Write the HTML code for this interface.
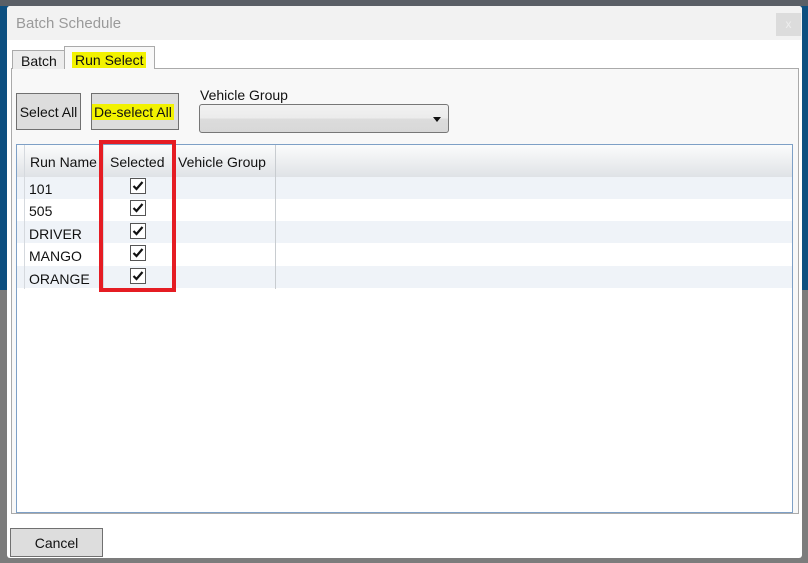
<!DOCTYPE html>
<html><head><meta charset="utf-8"><style>
*{box-sizing:border-box;margin:0;padding:0}
body{width:808px;height:563px;overflow:hidden;position:relative;font-family:"Liberation Sans",sans-serif;font-size:14px;color:#111;
background:linear-gradient(#5a5f66 0,#5a5f66 6px,#0d4f80 6px,#0d4f80 290px,#7c7c7c 290px)}
.a{position:absolute}
.dlg{left:7px;top:6px;width:795px;height:552px;background:#fff;border-radius:3px}
.title{left:7px;top:6px;width:795px;height:34px;background:#f2f2f2;border-radius:3px 3px 0 0}
.tt{left:16px;top:15px;color:#9a9a9a;font-size:15px}
.close{left:776px;top:13px;width:25px;height:23px;background:#dcdcdc;color:#eee;font-size:12px;text-align:center;line-height:22px}
.panel{left:11px;top:68px;width:788px;height:446px;background:#f8f8f8;border:1px solid #aaa}
.tab{border:1px solid #aaa;border-bottom:none;font-size:14px}
.btn{background:#dddddd;border:1px solid #707070;font-size:14px;text-align:center}
.hl{background:#f2f200}
.grid{left:16px;top:144px;width:777px;height:369px;background:#fff;border:1px solid #7ea0c6}
.hdr{left:17px;top:145px;width:775px;height:32px;background:linear-gradient(#fbfcfc,#dfe2e6)}
.row{left:17px;width:775px;height:22px}
.alt{background:#eff3f8}
.cell{font-size:14px}
.vl{width:1px;background:#d5d9de}
.cb{width:16px;height:16px;border:1px solid #555;background:#fff}
.red{left:99px;top:140px;width:77px;height:152px;border:4px solid #e51c23}
</style></head><body>
<div class="a dlg"></div>
<div class="a title"></div>
<div class="a tt">Batch Schedule</div>
<div class="a close">x</div>

<div class="a panel"></div>
<div class="a tab" style="left:12px;top:50px;width:53px;height:19px;background:#ececec"></div>
<div class="a" style="left:21px;top:53px">Batch</div>
<div class="a tab" style="left:64px;top:46px;width:91px;height:23px;background:#f8f8f8"></div>
<div class="a hl" style="left:72px;top:52px;padding:0 3px">Run Select</div>

<div class="a btn" style="left:16px;top:93px;width:65px;height:37px;line-height:36px">Select All</div>
<div class="a btn" style="left:91px;top:93px;width:88px;height:37px"></div>
<div class="a hl" style="left:92px;top:104px;padding:0 2px">De-select All</div>

<div class="a" style="left:200px;top:87px">Vehicle Group</div>
<div class="a" style="left:199px;top:104px;width:250px;height:29px;border:1px solid #777;border-radius:3px;background:linear-gradient(#f2f2f2 0,#ebebeb 50%,#dcdcdc 50%,#d8d8d8)"></div>
<div class="a" style="left:433px;top:117px;width:0;height:0;border-left:4px solid transparent;border-right:4px solid transparent;border-top:5px solid #111"></div>

<div class="a grid"></div>
<div class="a hdr"></div>
<div class="a row alt" style="top:177px"></div>
<div class="a row alt" style="top:221px"></div>
<div class="a row alt" style="top:266px"></div>
<div class="a vl" style="left:24px;top:145px;height:144px"></div>
<div class="a vl" style="left:103px;top:145px;height:144px"></div>
<div class="a vl" style="left:172px;top:145px;height:144px"></div>
<div class="a vl" style="left:275px;top:145px;height:144px;background:#c8ccd0"></div>
<div class="a cell" style="left:30px;top:154px">Run Name</div>
<div class="a cell" style="left:110px;top:154px">Selected</div>
<div class="a cell" style="left:178px;top:154px">Vehicle Group</div>

<div class="a cell" style="left:29px;top:181px">101</div>
<div class="a cell" style="left:29px;top:203px">505</div>
<div class="a cell" style="left:29px;top:226px">DRIVER</div>
<div class="a cell" style="left:29px;top:248px">MANGO</div>
<div class="a cell" style="left:29px;top:271px">ORANGE</div>

<svg class="a" style="left:130px;top:178px" width="18" height="110" viewBox="0 0 18 110">
<g fill="#fff" stroke="#555" stroke-width="1">
<rect x="0.5" y="0.5" width="15" height="15"/><rect x="0.5" y="22.5" width="15" height="15"/><rect x="0.5" y="45.5" width="15" height="15"/><rect x="0.5" y="67.5" width="15" height="15"/><rect x="0.5" y="90.5" width="15" height="15"/></g>
<g fill="none" stroke="#111" stroke-width="2.2">
<path d="M3.5 8 L6.5 11 L12.5 4"/><path d="M3.5 30 L6.5 33 L12.5 26"/><path d="M3.5 53 L6.5 56 L12.5 49"/><path d="M3.5 75 L6.5 78 L12.5 71"/><path d="M3.5 98 L6.5 101 L12.5 94"/></g>
</svg>
<div class="a red"></div>

<div class="a btn" style="left:10px;top:528px;width:93px;height:29px;line-height:28px">Cancel</div>
</body></html>
